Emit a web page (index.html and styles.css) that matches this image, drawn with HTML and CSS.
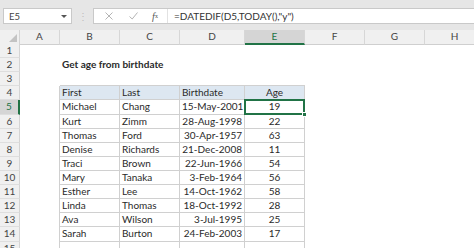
FILE: index.html
```html
<!DOCTYPE html>
<html>
<head>
  <title>Get age from birthdate</title>
  <meta name="viewport" content="width=device-width, initial-scale=1.0">
  <link rel="stylesheet" href="styles.css">
</head>
<body>
  <div class="toolbar">
    <div class="namebox"><span>E5</span><span class="caret"></span></div>
    <div class="grip">&#8942;</div>
    <div class="formula">
      <span class="btn">
        <svg width="8" height="8" viewBox="0 0 8 8"><path d="M0.5 0.5 L7.5 7.5 M7.5 0.5 L0.5 7.5" stroke="#b4b4b4" stroke-width="1" fill="none"/></svg>
      </span>
      <span class="btn">
        <svg width="9" height="8" viewBox="0 0 9 8"><path d="M0.5 4.5 L3.2 7 L8.5 0.5" stroke="#b4b4b4" stroke-width="1" fill="none"/></svg>
      </span>
      <span class="btn fx"><i>f</i><sub>x</sub></span>
      <div class="input">=DATEDIF(D5,TODAY(),"y")</div>
    </div>
  </div>

  <div class="sheet">
    <div class="row head">
      <div class="corner">
        <svg width="8" height="8" viewBox="0 0 8 8"><polygon points="8,0 8,8 0,8" fill="#c3c3c3"/></svg>
      </div>
      <div class="ch">A</div>
      <div class="ch">B</div>
      <div class="ch">C</div>
      <div class="ch">D</div>
      <div class="ch on">E</div>
      <div class="ch">F</div>
      <div class="ch">G</div>
      <div class="ch">H</div>
    </div>

    <div class="row"><div class="rh">1</div></div>
    <div class="row"><div class="rh">2</div><div class="c"></div><div class="c title">Get age from birthdate</div></div>
    <div class="row"><div class="rh">3</div><div class="c"></div><div class="c tb"></div><div class="c tb"></div><div class="c tb"></div><div class="c tb"></div></div>

    <div class="row">
      <div class="rh">4</div><div class="c te"></div>
      <div class="c t th">First</div><div class="c t th">Last</div><div class="c t th">Birthdate</div><div class="c t th mid">Age</div>
    </div>
    <div class="row">
      <div class="rh on">5</div><div class="c te"></div>
      <div class="c t">Michael</div><div class="c t">Chang</div><div class="c t num">15-May-2001</div><div class="c t mid sel">19</div>
    </div>
    <div class="row">
      <div class="rh">6</div><div class="c te"></div>
      <div class="c t">Kurt</div><div class="c t">Zimm</div><div class="c t num">28-Aug-1998</div><div class="c t mid">22</div>
    </div>
    <div class="row">
      <div class="rh">7</div><div class="c te"></div>
      <div class="c t">Thomas</div><div class="c t">Ford</div><div class="c t num">30-Apr-1957</div><div class="c t mid">63</div>
    </div>
    <div class="row">
      <div class="rh">8</div><div class="c te"></div>
      <div class="c t">Denise</div><div class="c t">Richards</div><div class="c t num">21-Dec-2008</div><div class="c t mid">11</div>
    </div>
    <div class="row">
      <div class="rh">9</div><div class="c te"></div>
      <div class="c t">Traci</div><div class="c t">Brown</div><div class="c t num">22-Jun-1966</div><div class="c t mid">54</div>
    </div>
    <div class="row">
      <div class="rh">10</div><div class="c te"></div>
      <div class="c t">Mary</div><div class="c t">Tanaka</div><div class="c t num">3-Feb-1964</div><div class="c t mid">56</div>
    </div>
    <div class="row">
      <div class="rh">11</div><div class="c te"></div>
      <div class="c t">Esther</div><div class="c t">Lee</div><div class="c t num">14-Oct-1962</div><div class="c t mid">58</div>
    </div>
    <div class="row">
      <div class="rh">12</div><div class="c te"></div>
      <div class="c t">Linda</div><div class="c t">Thomas</div><div class="c t num">18-Oct-1992</div><div class="c t mid">28</div>
    </div>
    <div class="row">
      <div class="rh">13</div><div class="c te"></div>
      <div class="c t">Ava</div><div class="c t">Wilson</div><div class="c t num">3-Jul-1995</div><div class="c t mid">25</div>
    </div>
    <div class="row">
      <div class="rh">14</div><div class="c te"></div>
      <div class="c t">Sarah</div><div class="c t">Burton</div><div class="c t num">24-Feb-2003</div><div class="c t mid">17</div>
    </div>
    <div class="row">
      <div class="rh">15</div><div class="c te"></div>
      <div class="c t"></div><div class="c t"></div><div class="c t"></div><div class="c t"></div>
    </div>
  </div>
</body>
</html>
```

FILE: styles.css
```css
body {
  margin: 0;
  width: 474px;
  height: 248px;
  overflow: hidden;
  background-color: #ffffff;
  font-family: 'Lato', 'Liberation Sans', sans-serif;
  font-size: 10px;
  color: #2a2a2a;
}
.toolbar {
  display: flex;
  align-items: flex-start;
  height: 30px;
  box-sizing: border-box;
  padding: 8px 0 0 3px;
  background-color: #e6e6e6;
}
.namebox {
  display: flex;
  align-items: center;
  justify-content: space-between;
  width: 69px;
  height: 16px;
  box-sizing: border-box;
  padding: 0 4px 0 5px;
  background-color: #ffffff;
  border: 1px solid #c9c9c9;
  color: #444444;
  font-size: 9.5px;
}
.caret {
  width: 0;
  height: 0;
  border-left: 3px solid transparent;
  border-right: 3px solid transparent;
  border-top: 3px solid #555555;
}
.grip {
  width: 21px;
  text-align: center;
  line-height: 16px;
  color: #bdbdbd;
  font-size: 10px;
}
.formula {
  flex: 1;
  display: flex;
  align-items: center;
  height: 16px;
  box-sizing: border-box;
  padding-left: 3px;
  background-color: #ffffff;
  border: 1px solid #c9c9c9;
  border-right: none;
}
.btn {
  display: flex;
  align-items: center;
  justify-content: center;
  width: 24px;
  height: 14px;
}
.fx {
  width: 20px;
  font-family: 'Liberation Serif', serif;
  color: #555555;
  font-size: 10px;
}
.fx sub {
  font-size: 6px;
  vertical-align: -1px;
}
.input {
  margin-left: 2px;
  padding-left: 6px;
  height: 14px;
  line-height: 14px;
  border-left: 1px solid #e2e2e2;
  color: #333333;
  white-space: nowrap;
}
.sheet {
  display: flex;
  flex-direction: column;
}
.row {
  display: grid;
  grid-template-columns: 20px 40px 60px 60px 65px 60px 60px 60px 60px;
  height: 14.12px;
  flex: none;
}
.head {
  height: 14px;
}
.corner {
  display: flex;
  align-items: flex-end;
  justify-content: flex-end;
  padding: 0 2px 2px 0;
  background-color: #f0f0f0;
  border-right: 1px solid #d4d4d4;
  border-bottom: 1px solid #cfcfcf;
}
.ch {
  box-sizing: border-box;
  text-align: center;
  line-height: 13px;
  color: #444444;
  background-color: #f0f0f0;
  border-right: 1px solid #d7d7d7;
  border-bottom: 1px solid #cfcfcf;
}
.ch.on {
  background-color: #d5d5d5;
  color: #217346;
  border-bottom: 2px solid #217346;
}
.rh {
  box-sizing: border-box;
  text-align: center;
  line-height: 13px;
  color: #444444;
  background-color: #f0f0f0;
  border-right: 1px solid #d4d4d4;
  border-bottom: 1px solid #dedede;
}
.rh.on {
  background-color: #d5d5d5;
  color: #217346;
  border-right: 2px solid #217346;
}
.c {
  box-sizing: border-box;
  padding: 0 2px;
  line-height: 13px;
  white-space: nowrap;
}
.title {
  font-weight: bold;
  overflow: visible;
}
.tb {
  border-bottom: 1px solid #d0d0d0;
}
.te {
  border-right: 1px solid #d0d0d0;
}
.t {
  border-right: 1px solid #d0d0d0;
  border-bottom: 1px solid #d0d0d0;
}
.th {
  background-color: #dde7f1;
}
.num {
  text-align: right;
}
.mid {
  text-align: center;
}
.sel {
  position: relative;
}
.sel::before {
  content: "";
  position: absolute;
  top: -1px;
  left: -1px;
  right: -1px;
  bottom: -1px;
  border: 2px solid #217346;
}
.sel::after {
  content: "";
  position: absolute;
  right: -3px;
  bottom: -3px;
  width: 3px;
  height: 3px;
  background-color: #217346;
  border: 1px solid #ffffff;
}
```
